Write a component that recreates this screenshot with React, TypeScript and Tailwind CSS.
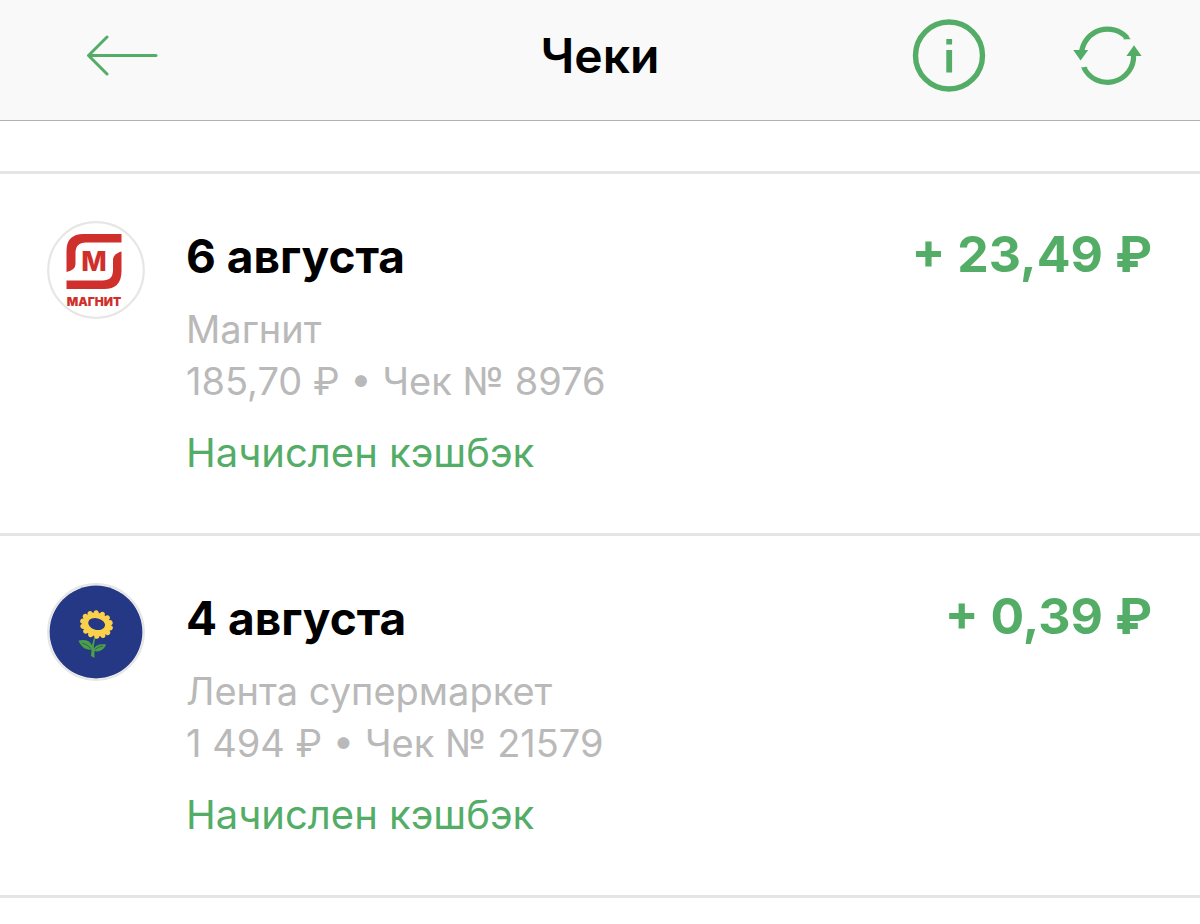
import React from 'react';

type Receipt = {
  id: number;
  date: string;
  store: string;
  total: string;
  number: string;
  cashback: string;
  status: string;
  logo: React.ReactNode;
};

function BackIcon() {
  return (
    <svg width="72" height="42" viewBox="0 0 72 42" fill="none" stroke="currentColor" strokeWidth="3" strokeLinecap="round" strokeLinejoin="round" aria-hidden="true">
      <path d="M70 20.500H3M21 2L2.5 20.500L21 39" />
    </svg>
  );
}

function InfoIcon() {
  return (
    <svg width="74" height="74" viewBox="0 0 74 74" fill="currentColor" aria-hidden="true">
      <circle cx="37" cy="36.500" r="33.5" fill="none" stroke="currentColor" strokeWidth="5.4" />
      <path d="M34.300 20h5.800v5.400h-5.800zM34.300 31h5.800v22.400h-5.800z" />
    </svg>
  );
}

function RefreshIcon() {
  return (
    <svg width="70" height="62" viewBox="0 1 70 62" fill="currentColor" aria-hidden="true">
      <path d="M9.6 28A26.2 26.2 0 0 1 55 13.700" fill="none" stroke="currentColor" strokeWidth="5.2" />
      <path d="M61.6 31A26.2 26.2 0 0 1 11.800 43.500" fill="none" stroke="currentColor" strokeWidth="5.2" />
      <path d="M1.2 26h15l-7.6 10.600zM54.400 32h15.200L62 21.200z" />
      <path d="M51 15.200h7.600l-3-4.300zM8.900 43.200h6.500l-1.500 4.500z" />
    </svg>
  );
}

function MagnitLogo() {
  return (
    <svg width="98" height="98" viewBox="0 0 98 98" role="img" aria-label="Магнит" className="shrink-0">
      <circle cx="49" cy="49" r="47.8" fill="#fff" stroke="#e6e6e4" strokeWidth="2.2" />
      <g fill="#d0302c">
        <path d="M19.500 51V30Q19.500 13 36.500 13H74.500V21.500H39Q28.500 21.500 28.500 32V43Q28.500 49 19.500 51Z" />
        <path d="M74.500 30.500V50Q74.500 68 57 68H19.500V59.500H55.500Q66 59.500 66 49V39Q66 33 74.500 30.500Z" />
        <text x="47" y="50" textAnchor="middle" className="font-['Inter'] text-[27px] font-extrabold">М</text>
        <text x="47" y="85" textAnchor="middle" className="font-['Inter'] text-[12px] font-black">МАГНИТ</text>
      </g>
    </svg>
  );
}

const petals = Array.from({ length: 14 }, (_, i) => (i * 360) / 14);

function LentaLogo() {
  return (
    <svg width="98" height="98" viewBox="0 0 98 98" role="img" aria-label="Лента" className="shrink-0">
      <circle cx="49" cy="49" r="47.8" fill="#fff" stroke="#e6e6e4" strokeWidth="2.2" />
      <circle cx="49" cy="49" r="46.400" fill="#243885" />
      <path d="M47 54.500C46 58 45.500 60 45 62.500C43 57.500 38 56 31.500 57.500C34 64.500 40 67.500 44.500 66.500L44 73L47.500 75L47.500 68C52 69.500 57.500 66.500 59 61.500C52 60.500 48 63 47 65.500C46.500 63 48 58 48.300 54.500Z" fill="#4ba046" />
      <path d="M35 60Q40 61 44 65.500M56 63Q51 63.500 48 66.500" fill="none" stroke="#243885" strokeWidth="0.600" />
      <g transform="translate(49.500 41.500) rotate(14)" fill="#fbd14b">
        <ellipse rx="14.500" ry="11.500" />
        {petals.map((angle) => {
          const a = (angle * Math.PI) / 180;
          const x = 13.2 * Math.cos(a);
          const y = 10.6 * Math.sin(a);
          return <ellipse key={angle} cx={x} cy={y} rx="3.600" ry="2.700" transform={`rotate(${angle} ${x} ${y})`} />;
        })}
        <ellipse rx="8.600" ry="5.800" cy="-0.500" fill="#243885" />
      </g>
    </svg>
  );
}

const receipts: Receipt[] = [
  { id: 1, date: '6 августа', store: 'Магнит', total: '185,70 ₽', number: '8976', cashback: '+ 23,49 ₽', status: 'Начислен кэшбэк', logo: <MagnitLogo /> },
  { id: 2, date: '4 августа', store: 'Лента супермаркет', total: '1 494 ₽', number: '21579', cashback: '+ 0,39 ₽', status: 'Начислен кэшбэк', logo: <LentaLogo /> },
];

export default function App() {
  return (
    <div className="min-h-screen bg-white font-['Inter',sans-serif] text-black">
      <header className="grid grid-cols-[1fr_auto_1fr] items-center border-b border-[#b2b2b2] bg-[#f9f9f9] pt-[19px] pb-[27px] px-[58px] text-[#53ad66]">
        <button type="button" aria-label="Назад" className="ml-7 justify-self-start">
          <BackIcon />
        </button>
        <h1 className="text-[48px] leading-[56px] font-semibold text-black">Чеки</h1>
        <div className="flex items-center justify-end gap-[86px]">
          <button type="button" aria-label="Информация">
            <InfoIcon />
          </button>
          <button type="button" aria-label="Обновить">
            <RefreshIcon />
          </button>
        </div>
      </header>

      <main className="pt-[50px]">
        <ul className="border-b-3 border-[#e5e5e5]">
          {receipts.map((r) => (
            <li key={r.id} className="flex items-start border-t-3 border-[#e5e5e5] pt-[47px] pb-[56px] pl-[47px] pr-12">
              {r.logo}
              <div className="ml-[41px] grow pt-[5px]">
                <h2 className="text-[46px] leading-[60px] font-bold">{r.date}</h2>
                <div className="mt-[17px] text-[38px] leading-[52px] text-[#b9b9b9]">
                  <p>{r.store}</p>
                  <p>{r.total} • Чек № {r.number}</p>
                </div>
                <p className="mt-[22px] text-[40px] leading-[48px] text-[#53ad66]">{r.status}</p>
              </div>
              <p className="pt-[3px] text-[50px] leading-[60px] font-bold whitespace-nowrap text-[#53ad66]">{r.cashback}</p>
            </li>
          ))}
        </ul>
      </main>
    </div>
  );
}
